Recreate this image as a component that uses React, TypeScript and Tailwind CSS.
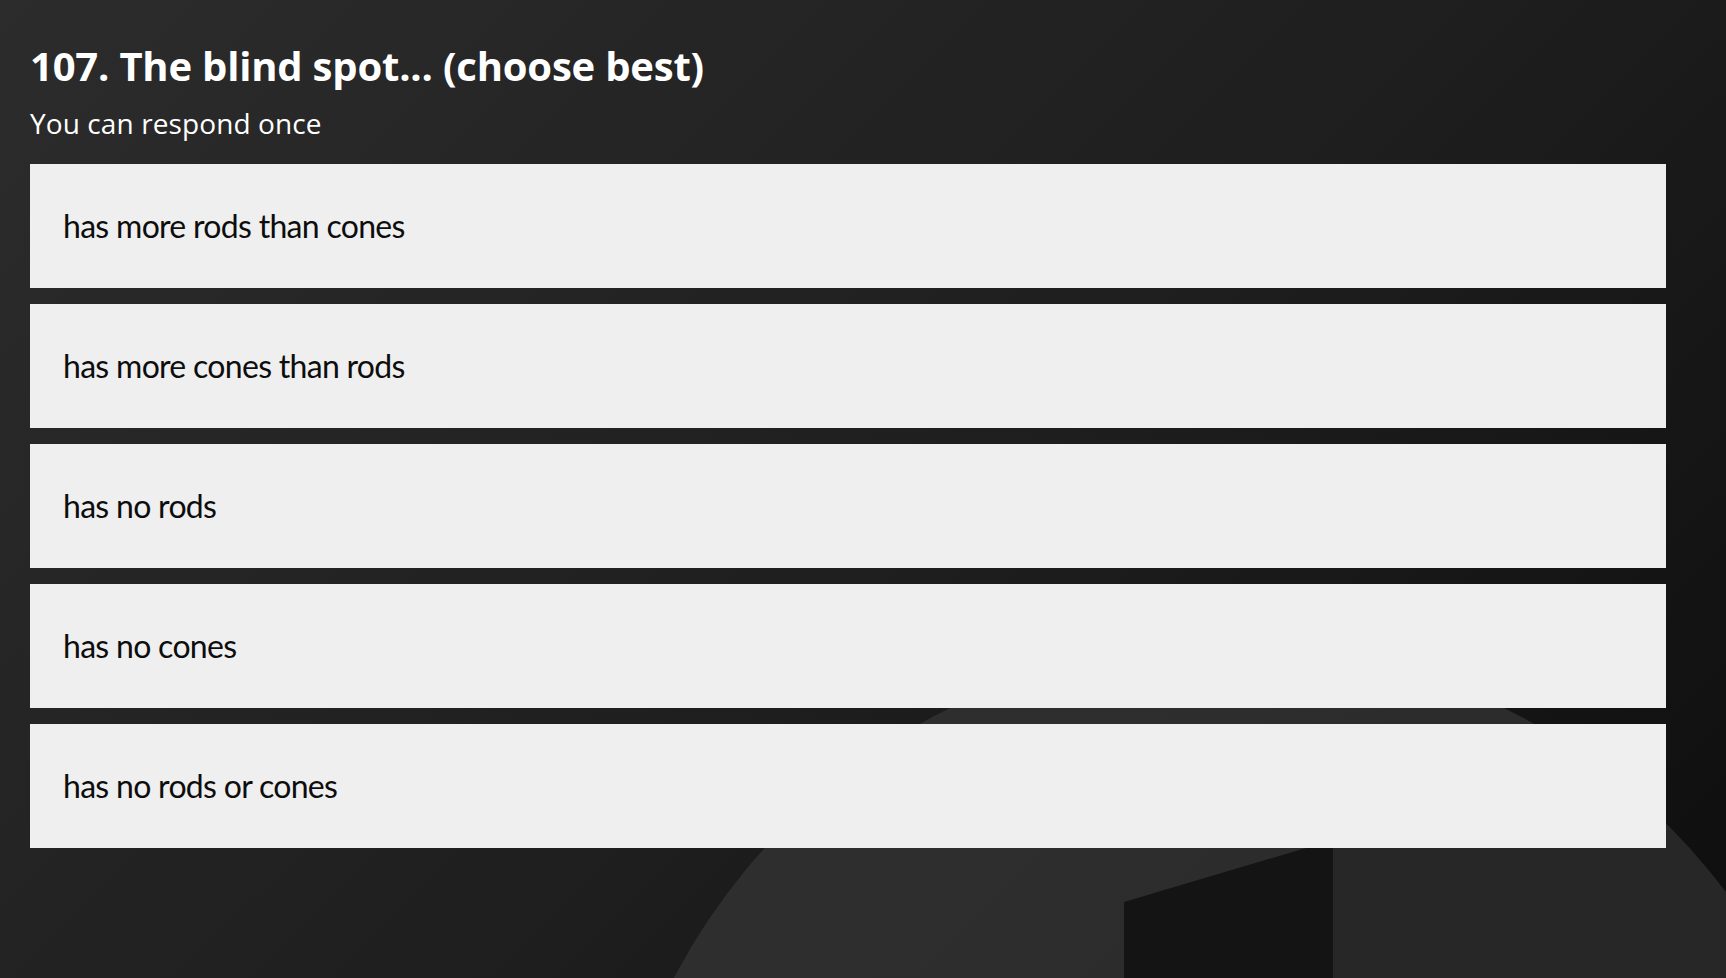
import React from 'react';

const options = [
  'has more rods than cones',
  'has more cones than rods',
  'has no rods',
  'has no cones',
  'has no rods or cones',
];

function Backdrop() {
  // decorative shapes behind the question
  return (
    <svg
      className="pointer-events-none absolute inset-0"
      width="1726"
      height="978"
      viewBox="0 0 1726 978"
    >
      <defs>
        <linearGradient id="disc" x1="0" y1="0" x2="1" y2="1">
          <stop offset="0" stopColor="#303030" />
          <stop offset="1" stopColor="#252525" />
        </linearGradient>
        <clipPath id="discClip">
          <circle cx="1227" cy="1267" r="624" />
        </clipPath>
      </defs>
      <circle cx="1227" cy="1267" r="624" fill="url(#disc)" />
      <polygon points="1124,902 1333,840 1333,978 1124,978" fill="#141414" />
      <rect x="1333" y="830" width="400" height="148" fill="#272727" clipPath="url(#discClip)" />
    </svg>
  );
}

export default function App() {
  return (
    <div
      className="relative h-[978px] w-full overflow-hidden bg-[linear-gradient(135deg,#2c2c2c_0%,#1e1e1e_55%,#0e0e0e_100%)]"
      style={{ fontFamily: 'Lato, "Noto Sans", sans-serif' }}
    >
      <Backdrop />
      <div className="relative pl-[30px] pr-[60px] pt-[42px]">
        <h1
          className="text-[40px] font-bold leading-[48px] tracking-[-0.2px] text-white"
          style={{ fontFamily: '"Open Sans", Lato, sans-serif' }}
        >
          107. The blind spot... (choose best)
        </h1>
        <p
          className="mt-[17px] text-[28px] leading-[33px] tracking-[0.1px] text-white"
          style={{ fontFamily: '"Open Sans", Lato, sans-serif' }}
        >
          You can respond once
        </p>
        <div className="mt-[24px] flex flex-col gap-[16px]">
          {options.map((o) => (
            <button
              key={o}
              className="flex h-[124px] w-full items-center bg-[#efefef] pl-[33px] text-left text-[32px] tracking-[-0.7px] text-[#0d0d0d]"
            >
              {o}
            </button>
          ))}
        </div>
      </div>
    </div>
  );
}
